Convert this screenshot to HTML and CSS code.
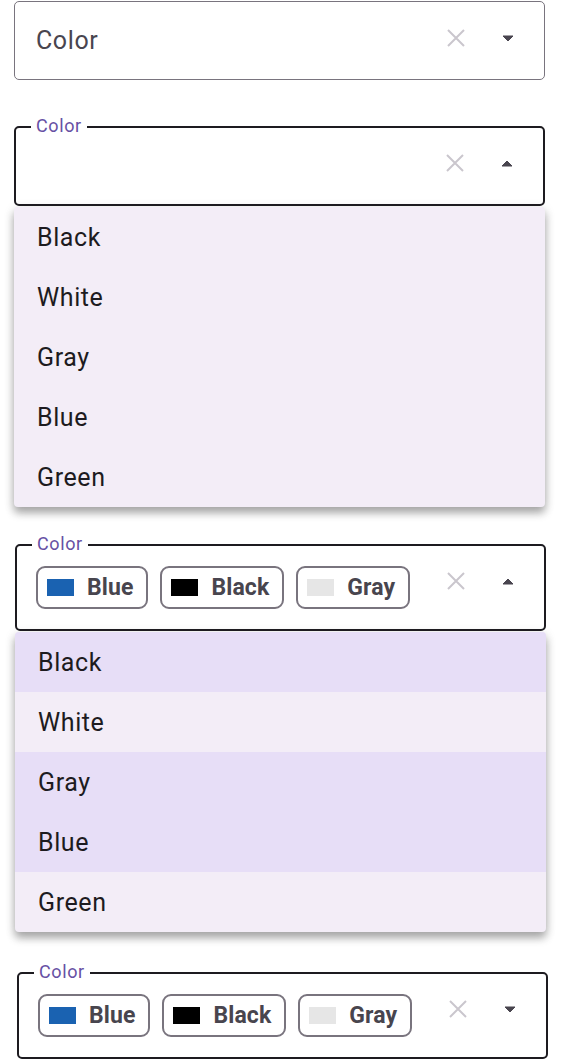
FILE: index.html
```html
<!DOCTYPE html>
<html lang="en">
<head>
<meta charset="utf-8">
<title>Color select</title>
<link rel="stylesheet" href="styles.css">
</head>
<body>
<div class="page">

  <div class="field field--idle">
    <div class="content"><span class="placeholder">Color</span></div>
    <div class="actions">
      <span class="icon-btn"><svg class="clear" width="20" height="20" viewBox="0 0 20 20"><path d="M2 2L18 18M18 2L2 18"/></svg></span>
      <span class="icon-btn"><svg class="caret" width="12" height="7" viewBox="0 0 12 7"><path d="M1 1h10l-5 5z"/></svg></span>
    </div>
  </div>

  <div class="group group--open">
    <div class="field field--focus field--plain">
      <span class="label">Color</span>
      <div class="content"></div>
      <div class="actions">
        <span class="icon-btn"><svg class="clear" width="20" height="20" viewBox="0 0 20 20"><path d="M2 2L18 18M18 2L2 18"/></svg></span>
        <span class="icon-btn"><svg class="caret" width="12" height="7" viewBox="0 0 12 7"><path d="M1 6h10l-5-5z"/></svg></span>
      </div>
    </div>
    <ul class="menu">
      <li class="item">Black</li>
      <li class="item">White</li>
      <li class="item">Gray</li>
      <li class="item">Blue</li>
      <li class="item">Green</li>
    </ul>
  </div>

  <div class="group group--chips group--shift1">
    <div class="field field--focus">
      <span class="label">Color</span>
      <div class="content chips">
        <span class="chip"><span class="swatch" style="background:#1a62b1"></span>Blue</span>
        <span class="chip"><span class="swatch" style="background:#000000"></span>Black</span>
        <span class="chip"><span class="swatch" style="background:#e6e6e6"></span>Gray</span>
      </div>
      <div class="actions">
        <span class="icon-btn"><svg class="clear" width="20" height="20" viewBox="0 0 20 20"><path d="M2 2L18 18M18 2L2 18"/></svg></span>
        <span class="icon-btn"><svg class="caret" width="12" height="7" viewBox="0 0 12 7"><path d="M1 6h10l-5-5z"/></svg></span>
      </div>
    </div>
    <ul class="menu">
      <li class="item item--selected">Black</li>
      <li class="item">White</li>
      <li class="item item--selected">Gray</li>
      <li class="item item--selected">Blue</li>
      <li class="item">Green</li>
    </ul>
  </div>

  <div class="group group--last group--shift3">
    <div class="field field--focus">
      <span class="label">Color</span>
      <div class="content chips">
        <span class="chip"><span class="swatch" style="background:#1a62b1"></span>Blue</span>
        <span class="chip"><span class="swatch" style="background:#000000"></span>Black</span>
        <span class="chip"><span class="swatch" style="background:#e6e6e6"></span>Gray</span>
      </div>
      <div class="actions">
        <span class="icon-btn"><svg class="clear" width="20" height="20" viewBox="0 0 20 20"><path d="M2 2L18 18M18 2L2 18"/></svg></span>
        <span class="icon-btn"><svg class="caret" width="12" height="7" viewBox="0 0 12 7"><path d="M1 1h10l-5 5z"/></svg></span>
      </div>
    </div>
  </div>

</div>
</body>
</html>
```

FILE: styles.css
```css
* { box-sizing: border-box; }

html, body {
  margin: 0;
  padding: 0;
  background: #ffffff;
}

body {
  font-family: Roboto, "Noto Sans", "Liberation Sans", sans-serif;
  color: #1d1b20;
}

.page {
  display: flex;
  flex-direction: column;
  padding: 1px 0 0 14px;
  width: 545px;
}

.group {
  display: flex;
  flex-direction: column;
}

.group--open { margin-top: 46px; }
.group--chips { margin-top: 37px; }
.group--last { margin-top: 40px; }
.group--shift1 { margin-left: 1px; }
.group--shift3 { margin-left: 3px; }

.field {
  position: relative;
  display: flex;
  align-items: flex-start;
  width: 531px;
  border-radius: 5px;
}

.field--idle {
  height: 79px;
  border: 1px solid #79747e;
}

.field--focus {
  border: 2px solid #1d1b20;
}

.field--plain { height: 80px; }

.content {
  flex: 1;
  min-width: 0;
  display: flex;
  align-items: center;
  align-self: stretch;
  padding-left: 21px;
}

.placeholder {
  font-size: 25px;
  letter-spacing: 0.6px;
  color: #49454f;
}

.label {
  position: absolute;
  top: -12px;
  left: 15px;
  padding: 0 5px;
  background: #ffffff;
  font-size: 18px;
  line-height: 20px;
  letter-spacing: 0.6px;
  color: #6750a4;
}

.actions {
  display: flex;
  margin-top: 11px;
  padding-right: 10px;
}

.field--idle .actions { margin-top: 12px; }

.icon-btn {
  width: 52px;
  height: 48px;
  display: flex;
  align-items: center;
  justify-content: center;
}

.clear path {
  stroke: #cac6cd;
  stroke-width: 2;
  fill: none;
}

.caret path {
  fill: #49454f;
  stroke: #49454f;
  stroke-width: 1;
  stroke-linejoin: round;
}

.chips {
  gap: 12px;
  padding: 20px 0 20px 19px;
}

.chip {
  display: inline-flex;
  align-items: center;
  height: 43px;
  padding: 0 13px 0 9px;
  border: 2px solid #79747e;
  border-radius: 9px;
  font-size: 23px;
  font-weight: 700;
  letter-spacing: 0.1px;
  color: #48454e;
}

.swatch {
  width: 27px;
  height: 17px;
  margin-right: 13px;
}

.menu {
  list-style: none;
  margin: 1px 0 0 0;
  padding: 0;
  width: 531px;
  background: #f3edf7;
  border-radius: 4px;
  box-shadow: 0 6px 8px rgba(0, 0, 0, 0.3), 0 2px 12px rgba(0, 0, 0, 0.12);
  overflow: hidden;
}

.item {
  height: 60px;
  display: flex;
  align-items: center;
  padding-left: 23px;
  font-size: 25px;
  letter-spacing: 0.6px;
  color: #1d1b20;
}

.item--selected { background: #e7def7; }
```
